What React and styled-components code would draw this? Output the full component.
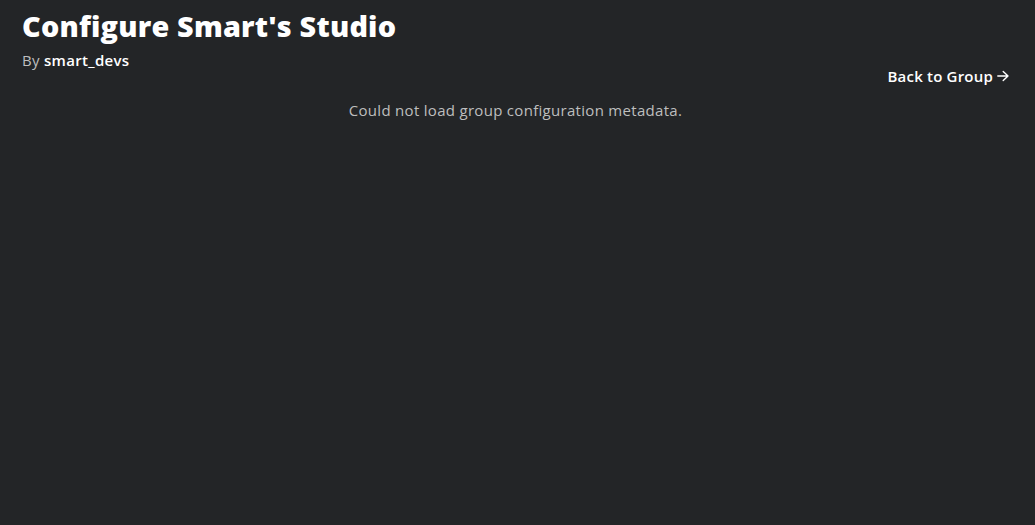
import styled, { createGlobalStyle } from "styled-components";

const GlobalStyle = createGlobalStyle`
  html, body {
    margin: 0;
    padding: 0;
    background-color: #232527;
  }
  body {
    font-family: "Open Sans", "Liberation Sans", sans-serif;
    color: #ffffff;
  }
`;

const Page = styled.div`
  min-height: 525px;
  padding: 8px 26px 0 22px;
  box-sizing: border-box;
  background-color: #232527;
`;

const Header = styled.header`
  display: flex;
  flex-direction: column;
`;

const Title = styled.h1`
  margin: 0;
  font-size: 28.8px;
  line-height: 36px;
  font-weight: 800;
  letter-spacing: 0.2px;
  color: #ffffff;
`;

const Byline = styled.div`
  margin-top: 8px;
  font-size: 15px;
  line-height: 16px;
  letter-spacing: 0.3px;
  color: #bdbebe;
`;

const Creator = styled.span`
  color: #ffffff;
  font-weight: 600;
`;

const Toolbar = styled.div`
  display: flex;
  justify-content: flex-end;
`;

const BackLink = styled.a`
  display: inline-flex;
  align-items: center;
  gap: 4px;
  font-size: 15px;
  line-height: 16px;
  font-weight: 600;
  letter-spacing: 0.2px;
  color: #ffffff;
  text-decoration: none;
  cursor: pointer;
`;

const Message = styled.p`
  margin: 16px 0 0;
  text-align: center;
  font-size: 15px;
  line-height: 20px;
  color: #bdbebe;
  letter-spacing: 0.3px;
`;

const Arrow = () => (
  <svg width="12" height="12" viewBox="0 0 12 12" fill="none">
    <path
      d="M0.8 6h10.2M6.2 1.4l4.8 4.6-4.8 4.6"
      stroke="#ffffff"
      strokeWidth="1.4"
      strokeLinecap="round"
      strokeLinejoin="round"
    />
  </svg>
);

export default function App() {
  return (
    <>
      <GlobalStyle />
      <Page>
        <Header>
          <Title>Configure Smart's Studio</Title>
          <Byline>
            By <Creator>smart_devs</Creator>
          </Byline>
        </Header>
        <Toolbar>
          <BackLink>
            Back to Group <Arrow />
          </BackLink>
        </Toolbar>
        <Message>Could not load group configuration metadata.</Message>
      </Page>
    </>
  );
}
